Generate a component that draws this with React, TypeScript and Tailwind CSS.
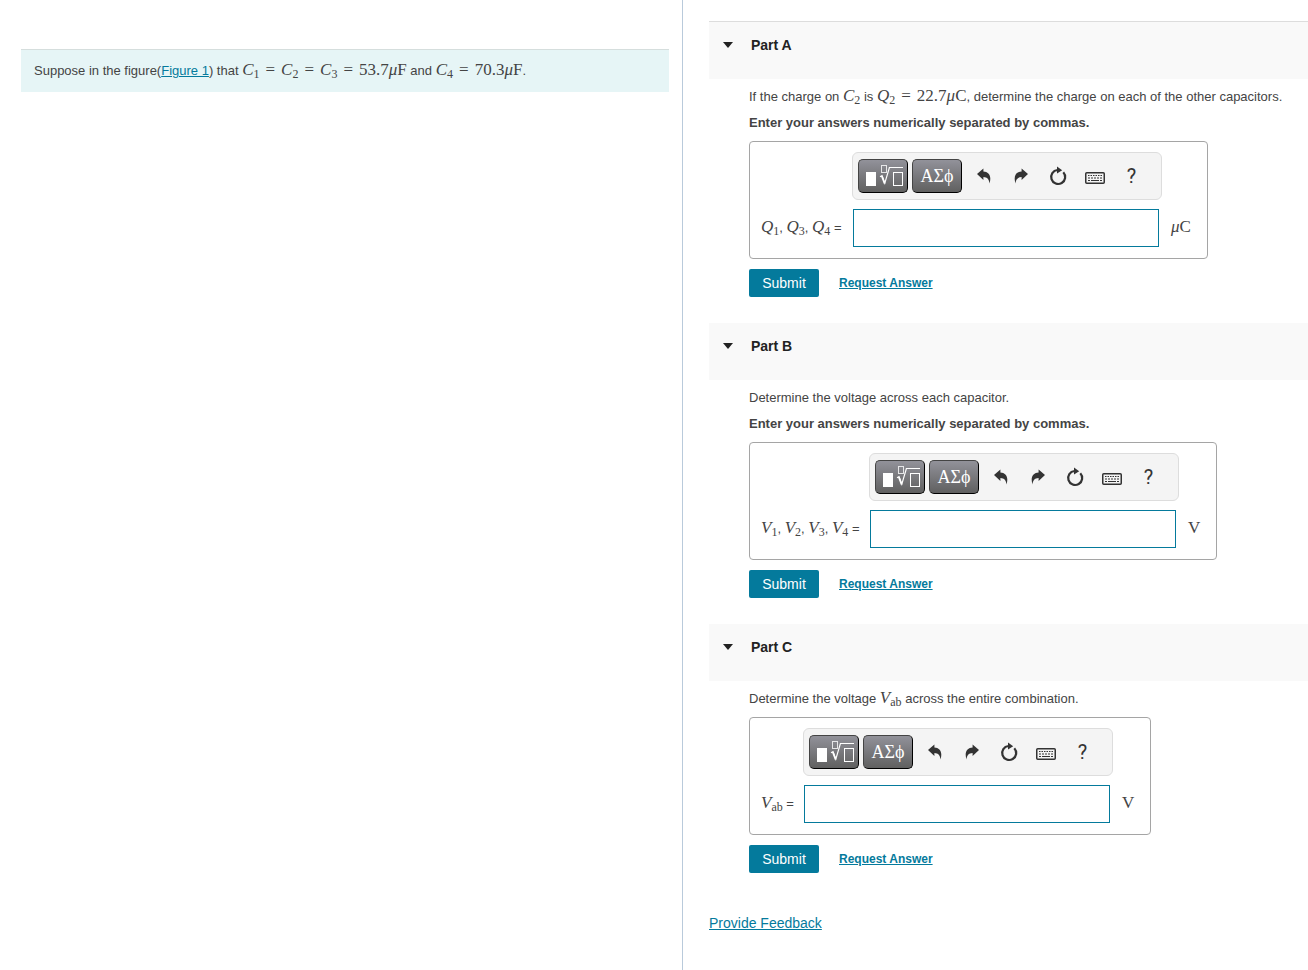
import type { ReactNode } from 'react'

interface MathProps {
    children: ReactNode
}

interface VarProps {
    name: string
    sub: string
}

interface PartProps {
    id: string
    title: string
    first?: boolean
    question: ReactNode
    hint?: string
    label: ReactNode
    labelWidth: string
    unit: ReactNode
}

function MathText({ children }: MathProps) {
    return (
        <span className="font-['Liberation_Serif',serif] text-[17px] leading-0 whitespace-nowrap">
            {children}
        </span>
    )
}

function Var({ name, sub }: VarProps) {
    return (
        <>
            <i>{name}</i>
            <sub className="text-[12px]">{sub}</sub>
        </>
    )
}

function Eq() {
    return <span className="px-1.5">=</span>
}

function TemplatesIcon() {
    return (
        <svg width="48" height="32" viewBox="1 1 48 32" fill="none" stroke="#fff">
            <rect x="8" y="13" width="10" height="14" fill="#fff" stroke="none" />
            <rect x="23.5" y="6.5" width="5" height="7" opacity=".8" />
            <path d="M22 17.7l2-1 2.8 7.5L31.4 8.5H45" strokeWidth="1.2" />
            <path d="M23.8 17l2.8 7.5" strokeWidth="1.8" />
            <rect x="35.5" y="13.5" width="9" height="13" />
        </svg>
    )
}

function UndoIcon() {
    return (
        <svg width="14" height="16" viewBox="0 0 14 16" fill="#333">
            <path d="M0 6L6.4 .4V3.4C11.8 3.6 15 8 12.4 15.6 12.2 11.4 10.4 9.3 6.4 9V12z" />
        </svg>
    )
}

function RedoIcon() {
    return (
        <svg width="14" height="16" viewBox="0 0 14 16" fill="#333">
            <path d="M14 6L7.6 .4V3.4C2.2 3.6-1 8 1.6 15.6 1.8 11.4 3.6 9.3 7.6 9V12z" />
        </svg>
    )
}

function ResetIcon() {
    return (
        <svg width="18" height="20" viewBox="0 0 18 20" fill="none">
            <path
                d="M14.3 6.2A7 7 0 1 1 8.5 4"
                stroke="#333"
                strokeWidth="2.2"
            />
            <path d="M8 .4l5.2 3.8L8 7.6z" fill="#333" />
        </svg>
    )
}

function KeyboardIcon() {
    return (
        <svg width="20" height="12" viewBox="0 0 20 12" fill="none" stroke="#333">
            <rect x=".75" y=".75" width="18.5" height="10.5" rx="1" strokeWidth="1.5" />
            <path d="M3 3.5h14" strokeDasharray="1.5 1" />
            <path d="M3 6h14" strokeDasharray="2 1" />
            <path d="M3 8.5h2M6 8.5h8M15 8.5h2" />
        </svg>
    )
}

function Toolbar() {
    const dark =
        'flex h-[34px] w-[50px] items-center justify-center rounded-[5px] border border-t-[#444] border-l-[#444] border-r-black border-b-black bg-linear-to-b from-[#92929a] to-[#606060] text-white'
    const plain = 'flex h-[34px] w-[37px] items-center justify-center'

    return (
        <div className="flex h-12 w-[310px] items-start rounded-md border border-[#ddd] bg-[#f4f4f4] pt-[6px] pl-[5px]">
            <div className="mr-[3px] flex gap-1">
                <button type="button" aria-label="Templates" className={dark}>
                    <TemplatesIcon />
                </button>
                <button type="button" aria-label="Symbols" className={dark}>
                    <span className="font-['Liberation_Serif',serif] text-[18px] leading-5">
                        ΑΣϕ
                    </span>
                </button>
            </div>
            <button type="button" aria-label="Undo" className={plain}>
                <UndoIcon />
            </button>
            <button type="button" aria-label="Redo" className={plain}>
                <RedoIcon />
            </button>
            <button type="button" aria-label="Reset" className={plain}>
                <ResetIcon />
            </button>
            <button type="button" aria-label="Keyboard shortcuts" className={`${plain} pt-1`}>
                <KeyboardIcon />
            </button>
            <button type="button" aria-label="Help" className={plain}>
                <span className="font-[Roboto,sans-serif] text-[20px] leading-5 text-[#333]">?</span>
            </button>
        </div>
    )
}

function Part({ id, title, first, question, hint, label, labelWidth, unit }: PartProps) {
    return (
        <section>
            <h2
                className={`flex items-start bg-[#f9f9f9] pt-[13px] pb-6 pl-[14px] text-[14px] leading-5 font-bold text-[#222] ${first ? 'border-t border-[#ddd]' : ''}`}
            >
                <button type="button" className="flex items-center gap-[18px]">
                    <svg width="10" height="6" viewBox="0 0 10 6" fill="#222">
                        <path d="M0 0h10L5 6z" />
                    </svg>
                    {title}
                </button>
            </h2>
            <form
                className="flex flex-col items-start gap-[10px] pt-[10px] pb-[26px] pl-10"
                onSubmit={(e) => e.preventDefault()}
            >
                <p className="leading-4">{question}</p>
                {hint && <p className="leading-4 font-bold">{hint}</p>}
                <div className="flex rounded border border-[#a5a5a5] pt-[10px] pr-4 pb-[11px] pl-[11px]">
                    <label
                        htmlFor={id}
                        className={`flex items-end pb-[11px] whitespace-nowrap ${labelWidth}`}
                    >
                        <span className="leading-4">{label} =</span>
                    </label>
                    <div className="flex flex-col gap-[9px]">
                        <Toolbar />
                        <input
                            id={id}
                            type="text"
                            className="ml-px h-[38px] w-[306px] border border-[#047a9c] bg-white px-2 text-[16px]"
                        />
                    </div>
                    <span className="flex items-end pb-[11px] pl-[9px]">
                        <span className="leading-4">
                            <MathText>{unit}</MathText>
                        </span>
                    </span>
                </div>
                <div className="flex items-center gap-5">
                    <button
                        type="submit"
                        className="h-7 w-[70px] rounded-xs bg-[#047a9c] text-[14px] text-white"
                    >
                        Submit
                    </button>
                    <a href="#" className="text-[12px] font-bold text-[#047a9c] underline">
                        Request Answer
                    </a>
                </div>
            </form>
        </section>
    )
}

export default function App() {
    return (
        <div className="grid min-h-screen grid-cols-[683fr_625fr] bg-white font-['Liberation_Sans',Arial,sans-serif] text-[13px] text-[#444]">
            <div className="border-r border-[#b9cadb] pt-[49px] pr-[13px] pl-[21px]">
                <p className="border-t border-[#d5dedd] bg-[#e6f5f6] p-[13px] leading-4">
                    Suppose in the figure(
                    <a href="#" className="text-[#047a9c] underline">
                        Figure 1
                    </a>
                    ) that{' '}
                    <MathText>
                        <Var name="C" sub="1" />
                        <Eq />
                        <Var name="C" sub="2" />
                        <Eq />
                        <Var name="C" sub="3" />
                        <Eq />
                        53.7<i>μ</i>F
                    </MathText>{' '}
                    and{' '}
                    <MathText>
                        <Var name="C" sub="4" />
                        <Eq />
                        70.3<i>μ</i>F
                    </MathText>
                    .
                </p>
            </div>

            <main className="pt-[21px] pl-[26px]">
                <Part
                    id="part-a"
                    title="Part A"
                    first
                    question={
                        <>
                            If the charge on{' '}
                            <MathText>
                                <Var name="C" sub="2" />
                            </MathText>{' '}
                            is{' '}
                            <MathText>
                                <Var name="Q" sub="2" />
                                <Eq />
                                22.7<i>μ</i>C
                            </MathText>
                            , determine the charge on each of the other capacitors.
                        </>
                    }
                    hint="Enter your answers numerically separated by commas."
                    label={
                        <>
                            <MathText><Var name="Q" sub="1" /></MathText>,{' '}
                            <MathText><Var name="Q" sub="3" /></MathText>,{' '}
                            <MathText><Var name="Q" sub="4" /></MathText>
                        </>
                    }
                    labelWidth="w-[91px]"
                    unit={<><i>μ</i>C</>}
                />
                <Part
                    id="part-b"
                    title="Part B"
                    question="Determine the voltage across each capacitor."
                    hint="Enter your answers numerically separated by commas."
                    label={
                        <>
                            <MathText><Var name="V" sub="1" /></MathText>,{' '}
                            <MathText><Var name="V" sub="2" /></MathText>,{' '}
                            <MathText><Var name="V" sub="3" /></MathText>,{' '}
                            <MathText><Var name="V" sub="4" /></MathText>
                        </>
                    }
                    labelWidth="w-[108px]"
                    unit="V"
                />
                <Part
                    id="part-c"
                    title="Part C"
                    question={
                        <>
                            Determine the voltage{' '}
                            <MathText>
                                <Var name="V" sub="ab" />
                            </MathText>{' '}
                            across the entire combination.
                        </>
                    }
                    label={<MathText><Var name="V" sub="ab" /></MathText>}
                    labelWidth="w-[42px]"
                    unit="V"
                />
                <a href="#" className="mt-[14px] inline-block text-[14px] leading-5 text-[#047a9c] underline">
                    Provide Feedback
                </a>
            </main>
        </div>
    )
}
